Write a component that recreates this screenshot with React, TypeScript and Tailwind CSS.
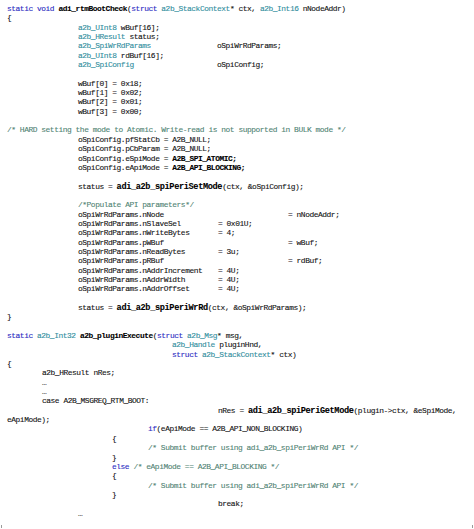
import React from "react";

const K = ({ children }: { children: React.ReactNode }) => (
  <span className="text-[#2a2ac2]">{children}</span>
);
const T = ({ children }: { children: React.ReactNode }) => (
  <span className="text-[#2f8d9d]">{children}</span>
);
const C = ({ children }: { children: React.ReactNode }) => (
  <span className="text-[#4f8373]">{children}</span>
);
const B = ({ children }: { children: React.ReactNode }) => (
  <span className="font-bold text-black">{children}</span>
);
const BB = ({ children }: { children: React.ReactNode }) => (
  <span className="font-bold text-black text-[8.6px] tracking-[-0.36px] leading-none">{children}</span>
);

const L = ({ pl, children }: { pl: string; children?: React.ReactNode }) => (
  <div className={`h-[9.35px] leading-[9.35px] whitespace-pre ${pl}`}>{children}</div>
);

export default function App() {
  const p7 = "pl-[7px]";
  const p78 = "pl-[78px]";
  return (
    <div
      className="w-[474px] h-[529px] bg-white flex flex-col text-[#111] text-[7.9px] tracking-[-0.45px] pt-[4px] overflow-hidden [-webkit-text-stroke:0.1px]"
      style={{ fontFamily: '"Liberation Mono", "DejaVu Sans Mono", monospace' }}
    >
      <L pl={p7}>
        <K>static</K> <K>void</K> <B>adi_rtmBootCheck</B>(<K>struct</K> <T>a2b_StackContext</T>* ctx, <T>a2b_Int16</T> nNodeAddr)
      </L>
      <L pl={p7}>{"{"}</L>
      <L pl={p78}><T>a2b_UInt8</T> wBuf[16];</L>
      <L pl={p78}><T>a2b_HResult</T> status;</L>
      <L pl={p78}><span className="inline-block w-[139px]"><T>a2b_SpiWrRdParams</T></span>oSpiWrRdParams;</L>
      <L pl={p78}><T>a2b_UInt8</T> rdBuf[16];</L>
      <L pl={p78}><span className="inline-block w-[139px]"><T>a2b_SpiConfig</T></span>oSpiConfig;</L>
      <L pl={p78} />
      <L pl={p78}>wBuf[0] = 0x18;</L>
      <L pl={p78}>wBuf[1] = 0x02;</L>
      <L pl={p78}>wBuf[2] = 0x01;</L>
      <L pl={p78}>wBuf[3] = 0x00;</L>
      <L pl={p78} />
      <L pl={p7}><C>/* HARD setting the mode to Atomic. Write-read is not supported in BULK mode */</C></L>
      <L pl={p78}>oSpiConfig.pfStatCb = A2B_NULL;</L>
      <L pl={p78}>oSpiConfig.pCbParam = A2B_NULL;</L>
      <L pl={p78}>oSpiConfig.eSpiMode = <B>A2B_SPI_ATOMIC;</B></L>
      <L pl={p78}>oSpiConfig.eApiMode = <B>A2B_API_BLOCKING;</B></L>
      <L pl={p78} />
      <L pl={p78}>status = <BB>adi_a2b_spiPeriSetMode</BB>(ctx, &amp;oSpiConfig);</L>
      <L pl={p78} />
      <L pl={p78}><C>/*Populate API parameters*/</C></L>
      <L pl={p78}><span className="inline-block w-[210px]">oSpiWrRdParams.nNode</span>= nNodeAddr;</L>
      <L pl={p78}><span className="inline-block w-[140px]">oSpiWrRdParams.nSlaveSel</span>= 0x01U;</L>
      <L pl={p78}><span className="inline-block w-[140px]">oSpiWrRdParams.nWriteBytes</span>= 4;</L>
      <L pl={p78}><span className="inline-block w-[210px]">oSpiWrRdParams.pWBuf</span>= wBuf;</L>
      <L pl={p78}><span className="inline-block w-[140px]">oSpiWrRdParams.nReadBytes</span>= 3u;</L>
      <L pl={p78}><span className="inline-block w-[210px]">oSpiWrRdParams.pRBuf</span>= rdBuf;</L>
      <L pl={p78}><span className="inline-block w-[140px]">oSpiWrRdParams.nAddrIncrement</span>= 4U;</L>
      <L pl={p78}><span className="inline-block w-[140px]">oSpiWrRdParams.nAddrWidth</span>= 4U;</L>
      <L pl={p78}><span className="inline-block w-[140px]">oSpiWrRdParams.nAddrOffset</span>= 4U;</L>
      <L pl={p78} />
      <L pl={p78}>status = <BB>adi_a2b_spiPeriWrRd</BB>(ctx, &amp;oSpiWrRdParams);</L>
      <L pl={p7}>{"}"}</L>
      <L pl={p7} />
      <L pl={p7}>
        <K>static</K> <T>a2b_Int32</T> <B>a2b_pluginExecute</B>(<K>struct</K> <T>a2b_Msg</T>* msg,
      </L>
      <L pl="pl-[172px]"><T>a2b_Handle</T> pluginHnd,</L>
      <L pl="pl-[172px]"><K>struct</K> <T>a2b_StackContext</T>* ctx)</L>
      <L pl={p7}>{"{"}</L>
      <L pl="pl-[42px]">a2b_HResult nRes;</L>
      <L pl="pl-[42px]">…</L>
      <L pl="pl-[42px]">…</L>
      <L pl="pl-[42px]">case A2B_MSGREQ_RTM_BOOT:</L>
      <L pl="pl-[218px]">nRes = <BB>adi_a2b_spiPeriGetMode</BB>(plugin-&gt;ctx, &amp;eSpiMode,</L>
      <L pl={p7}>eApiMode);</L>
      <L pl="pl-[148px]"><K>if</K>(eApiMode == A2B_API_NON_BLOCKING)</L>
      <L pl="pl-[112px]">{"{"}</L>
      <L pl="pl-[148px]"><C>/* Submit buffer using adi_a2b_spiPeriWrRd API */</C></L>
      <L pl="pl-[112px]">{"}"}</L>
      <L pl="pl-[112px]"><K>else</K> <C>/* eApiMode == A2B_API_BLOCKING */</C></L>
      <L pl="pl-[112px]">{"{"}</L>
      <L pl="pl-[148px]"><C>/* Submit buffer using adi_a2b_spiPeriWrRd API */</C></L>
      <L pl="pl-[112px]">{"}"}</L>
      <L pl="pl-[218px]">break;</L>
      <L pl={p78}>…</L>
      <div className="mt-auto mb-[1px] flex justify-between px-[1px]">
        <div className="w-[1px] h-[3px] bg-[#9a9a9a]" />
        <div className="w-[1px] h-[3px] bg-[#9a9a9a]" />
      </div>
    </div>
  );
}
